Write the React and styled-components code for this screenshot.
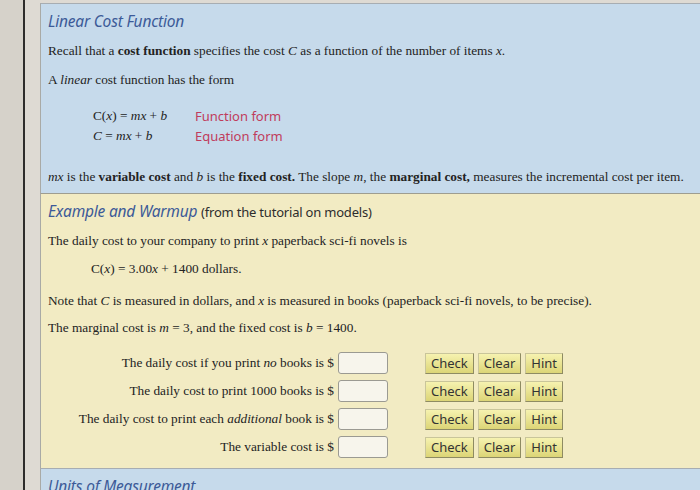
import React from 'react'
import styled, { createGlobalStyle } from 'styled-components'

const GlobalStyle = createGlobalStyle`
  html, body {
    margin: 0;
    padding: 0;
    background: #dbd7cf;
  }
  body {
    width: 700px;
    height: 490px;
    overflow: hidden;
  }
`

const rows = [
  { label: <>The daily cost if you print <i>no</i> books is $</> },
  { label: <>The daily cost to print 1000 books is $</> },
  { label: <>The daily cost to print each <i>additional</i> book is $</> },
  { label: <>The variable cost is $</> },
]

const App = () => {
  return (
    <>
      <GlobalStyle />
      <Page>
        <Gutter />
        <Rule />
        <Margin />
        <Content>
          <Panel tone="blue">
            <Title>Linear Cost Function</Title>
            <Para>
              Recall that a <b>cost function</b> specifies the cost <i>C</i> as a function of the number of items <i>x</i>.
            </Para>
            <Para>
              A <i>linear</i> cost function has the form
            </Para>
            <Forms>
              <Formula>C(<i>x</i>) = <i>mx</i> + <i>b</i></Formula>
              <FormName>Function form</FormName>
              <Formula><i>C</i> = <i>mx</i> + <i>b</i></Formula>
              <FormName>Equation form</FormName>
            </Forms>
            <Para gap={22}>
              <i>mx</i> is the <b>variable cost</b> and <i>b</i> is the <b>fixed cost.</b> The slope <i>m</i>, the <b>marginal cost,</b> measures the incremental cost per item.
            </Para>
          </Panel>

          <Panel tone="yellow">
            <Title>
              Example and Warmup <Aside>(from the tutorial on models)</Aside>
            </Title>
            <Para gap={10}>
              The daily cost to your company to print <i>x</i> paperback sci-fi novels is
            </Para>
            <Display>
              C(<i>x</i>) = 3.00<i>x</i> + 1400 dollars.
            </Display>
            <Para gap={0}>
              Note that <i>C</i> is measured in dollars, and <i>x</i> is measured in books (paperback sci-fi novels, to be precise).
            </Para>
            <Para gap={9}>
              The marginal cost is <i>m</i> = 3, and the fixed cost is <i>b</i> = 1400.
            </Para>
            <Questions>
              {rows.map((row, i) => (
                <Question key={i}>
                  <Label>{row.label}</Label>
                  <Answer type="text" />
                  <Buttons>
                    <Btn>Check</Btn>
                    <Btn>Clear</Btn>
                    <Btn>Hint</Btn>
                  </Buttons>
                </Question>
              ))}
            </Questions>
          </Panel>

          <Panel tone="blue">
            <Title>Units of Measurement</Title>
          </Panel>
        </Content>
      </Page>
    </>
  )
}

const Page = styled.div`
  display: flex;
  height: 490px;
  overflow: hidden;
  font-family: "Liberation Serif", "Times New Roman", serif;
  color: #232323;
`
const Gutter = styled.div`
  width: 23px;
  background: #d6d2ca;
`
const Rule = styled.div`
  width: 2px;
  background: #2e2d2b;
`
const Margin = styled.div`
  width: 15px;
  background: #dedad3;
`
const Content = styled.div`
  flex: 1;
  padding-top: 3px;
  display: flex;
  flex-direction: column;
  background: #dedad3;
`
const Panel = styled.section`
  background: ${props => props.tone === 'blue' ? '#c6daeb' : '#f2ebc3'};
  border-left: 1px solid #a9aaa6;
  border-top: 1px solid ${props => props.tone === 'blue' ? '#a7adb2' : '#9e9d90'};
  padding: 7px 8px 7px 7px;
`
const Title = styled.h2`
  margin: 0;
  font-family: "Noto Sans", "Open Sans", sans-serif;
  font-size: 15.5px;
  line-height: 20px;
  font-weight: 400;
  font-style: italic;
  color: #3c5a98;
  letter-spacing: -0.2px;
`
const Aside = styled.span`
  font-style: normal;
  font-size: 13px;
  color: #2d2d2d;
`
const Para = styled.p`
  margin: ${props => props.gap !== undefined ? props.gap : 11}px 0 0;
  font-size: 13.3px;
  line-height: 18px;
`
const Forms = styled.div`
  display: grid;
  grid-template-columns: 102px auto;
  margin: 17px 0 0 45px;
  font-size: 13.3px;
  line-height: 20px;
`
const Formula = styled.span`
  white-space: nowrap;
`
const FormName = styled.span`
  font-family: "Noto Sans", "Open Sans", sans-serif;
  font-size: 13px;
  color: #c03c5c;
`
const Display = styled.div`
  margin: 10px 0 14px 43px;
  font-size: 13.3px;
  line-height: 18px;
`
const Questions = styled.div`
  margin-top: 12px;
  display: flex;
  flex-direction: column;
`
const Question = styled.div`
  display: grid;
  grid-template-columns: 286px 50px auto;
  column-gap: 4px;
  align-items: center;
  height: 28px;
`
const Label = styled.span`
  text-align: right;
  font-size: 13.3px;
  white-space: nowrap;
`
const Answer = styled.input`
  box-sizing: border-box;
  width: 50px;
  height: 22px;
  border: 1px solid #9b9a92;
  border-radius: 3px;
  background: #f7f5ec;
`
const Buttons = styled.div`
  display: flex;
  gap: 4px;
  margin-left: 33px;
`
const Btn = styled.button`
  font-family: "Noto Sans", "Open Sans", sans-serif;
  font-size: 13px;
  line-height: 18px;
  color: #333;
  padding: 0 5px;
  height: 21px;
  background: linear-gradient(#f6f2b0, #dcd576);
  border: 1px solid #c9c59a;
  border-right-color: #8e8b62;
  border-bottom-color: #8e8b62;
  border-radius: 0;
  cursor: pointer;
`

export default App
